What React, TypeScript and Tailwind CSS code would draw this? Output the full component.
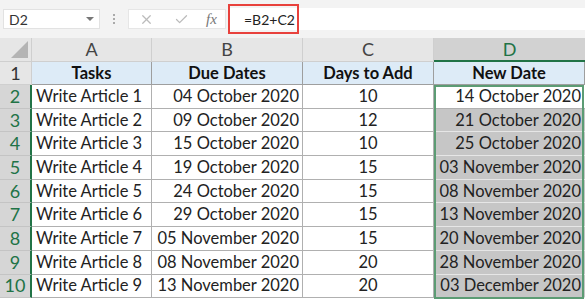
import { FiX, FiCheck } from "react-icons/fi";

const rows = [
  ["Write Article 1", "04 October 2020", "10", "14 October 2020"],
  ["Write Article 2", "09 October 2020", "12", "21 October 2020"],
  ["Write Article 3", "15 October 2020", "10", "25 October 2020"],
  ["Write Article 4", "19 October 2020", "15", "03 November 2020"],
  ["Write Article 5", "24 October 2020", "15", "08 November 2020"],
  ["Write Article 6", "29 October 2020", "15", "13 November 2020"],
  ["Write Article 7", "05 November 2020", "15", "20 November 2020"],
  ["Write Article 8", "08 November 2020", "20", "28 November 2020"],
  ["Write Article 9", "13 November 2020", "20", "03 December 2020"],
];

const cols = ["A", "B", "C", "D"];

export default function App() {
  return (
    <div
      className="w-[585px] h-[300px] overflow-hidden bg-white text-[#222]"
      style={{ fontFamily: "Lato, 'Open Sans', sans-serif" }}
    >
      {/* formula bar */}
      <div className="h-[38px] bg-[#f3f3f3] flex items-center">
        <div className="ml-[3px] w-[97px] h-[20px] bg-white border border-[#e2e2e2] flex items-center justify-between px-[5px]">
          <span className="text-[14px] text-[#333]">D2</span>
          <span className="w-0 h-0 border-l-[4px] border-r-[4px] border-t-[4px] border-l-transparent border-r-transparent border-t-[#777]" />
        </div>
        <div className="ml-[13px] flex flex-col gap-[2px]">
          <span className="w-[2px] h-[2px] bg-[#aaa]" />
          <span className="w-[2px] h-[2px] bg-[#aaa]" />
          <span className="w-[2px] h-[2px] bg-[#aaa]" />
        </div>
        <div className="ml-[13px] w-[98px] h-[20px] bg-white border border-[#e6e6e6] flex items-center text-[#bbb]">
          <FiX className="ml-[10px] text-[15px]" />
          <FiCheck className="ml-[20px] text-[15px]" />
          <span
            className="ml-[17px] italic text-[15px] text-[#777]"
            style={{ fontFamily: "'Liberation Serif', serif" }}
          >
            fx
          </span>
        </div>
        <div className="ml-[2px] flex-1 h-[22px] bg-white relative flex items-center">
          <div className="absolute left-0 top-[-4px] w-[71px] h-[30px] border-2 border-[#e8413c]" />
          <span className="ml-[16px] text-[14px] text-[#222]">=B2+C2</span>
        </div>
      </div>

      {/* sheet */}
      <div className="relative grid grid-cols-[32px_120px_151px_131px_151px] grid-rows-[24px_23px_repeat(9,23.7px)]">
        {/* corner */}
        <div className="bg-[#e6e6e6] border-r border-b border-[#cfcfcf] flex items-end justify-end p-[3px]">
          <div className="w-[17px] h-[17px] bg-[#b4b4b4] [clip-path:polygon(100%_0,100%_100%,0_100%)]" />
        </div>
        {cols.map((c) =>
          c === "D" ? (
            <div
              key={c}
              className="bg-[#d2d2d2] border-b-2 border-[#217346] flex items-center justify-center text-[18px] text-[#217346]"
            >
              {c}
            </div>
          ) : (
            <div
              key={c}
              className="bg-[#e6e6e6] border-r border-b border-[#cfcfcf] flex items-center justify-center text-[18px] text-[#444]"
            >
              {c}
            </div>
          )
        )}

        {/* row 1 */}
        <div className="bg-[#e6e6e6] border-r border-b border-[#cfcfcf] flex items-center justify-center text-[18px] text-[#333]">
          1
        </div>
        {["Tasks", "Due Dates", "Days to Add", "New Date"].map((h) => (
          <div
            key={h}
            className="bg-[#ddebf7] border-r border-b border-[#9e9e9e] flex items-center justify-center text-[16.5px] font-bold text-[#111]"
          >
            {h}
          </div>
        ))}

        {rows.map((r, i) => (
          <div key={i} className="contents">
            <div className="bg-[#d6d6d6] border-r-2 border-r-[#217346] border-b border-b-[#c4c4c4] flex items-center justify-center text-[18px] text-[#217346]">
              {i + 2}
            </div>
            <div className="border-r border-b border-[#b0b0b0] flex items-center pl-[4px] text-[16.5px] whitespace-nowrap">
              {r[0]}
            </div>
            <div className="border-r border-b border-[#b0b0b0] flex items-center justify-end pr-[3px] text-[16.5px] whitespace-nowrap">
              {r[1]}
            </div>
            <div className="border-r border-b border-[#b0b0b0] flex items-center justify-center text-[16.5px]">
              {r[2]}
            </div>
            <div
              className={
                "border-b flex items-center justify-end pr-[4px] text-[16.5px] whitespace-nowrap " +
                (i === 0 ? "bg-white border-[#b0b0b0]" : "bg-[#c6c6c6] border-[#e6e6e6]")
              }
            >
              {r[3]}
            </div>
          </div>
        ))}

        {/* selection outline D2:D10 */}
        <div className="absolute left-[434px] top-[47px] w-[150px] h-[214px] border-2 border-[#5c9c74] pointer-events-none" />
      </div>
    </div>
  );
}
